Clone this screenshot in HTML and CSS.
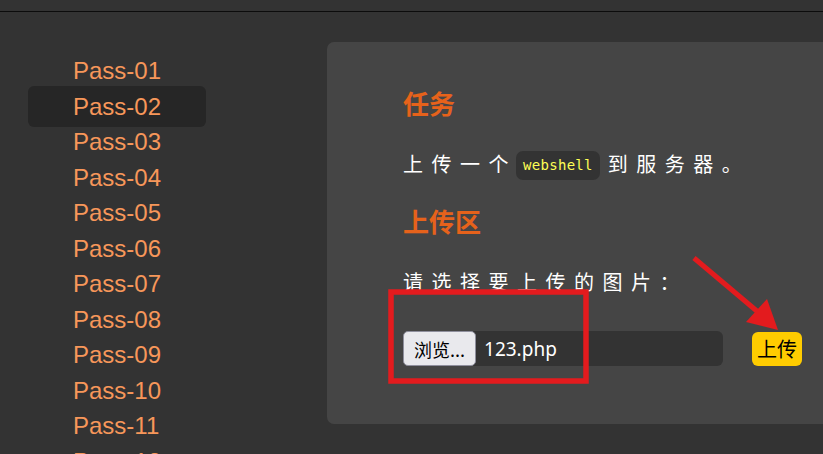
FILE: index.html
```html
<!DOCTYPE html>
<html lang="zh-CN">
<head>
  <meta charset="UTF-8" />
  <title>Upload Labs - Pass-02</title>
  <link rel="stylesheet" href="styles.css" />
</head>
<body>

<div class="topbar"></div>

<div class="layout">
  <!-- 左侧关卡列表 -->
  <ul class="menu">
    <li><a href="#">Pass-01</a></li>
    <li class="active"><a href="#">Pass-02</a></li>
    <li><a href="#">Pass-03</a></li>
    <li><a href="#">Pass-04</a></li>
    <li><a href="#">Pass-05</a></li>
    <li><a href="#">Pass-06</a></li>
    <li><a href="#">Pass-07</a></li>
    <li><a href="#">Pass-08</a></li>
    <li><a href="#">Pass-09</a></li>
    <li><a href="#">Pass-10</a></li>
    <li><a href="#">Pass-11</a></li>
    <li><a href="#">Pass-12</a></li>
  </ul>

  <!-- 主体 -->
  <section class="panel">
    <h2>任务</h2>
    <p class="text">上传一个<code>webshell</code>到服务器。</p>
    <h2>上传区</h2>
    <p class="text">请选择要上传的图片：</p>
    <form class="upload-row">
      <div class="file-field">
        <button type="button" class="browse">浏览...</button>
        <span class="file-name">123.php</span>
      </div>
      <button type="button" class="upload-btn">上传</button>
    </form>
  </section>
</div>

<!-- 标注 -->
<svg class="marks" width="823" height="454" viewBox="0 0 823 454">
  <rect x="391" y="292" width="195" height="89" fill="none" stroke="#e31b1e" stroke-width="5.5" />
  <line x1="694" y1="258" x2="758" y2="312" stroke="#e31b1e" stroke-width="5" />
  <polygon points="746,322 767,299 778,330" fill="#e31b1e" />
</svg>

</body>
</html>
```

FILE: styles.css
```css
/* Reset & Global */
* {
  box-sizing: border-box;
}
html, body {
  margin: 0;
  padding: 0;
  height: 100%;
  overflow: hidden;
}
body {
  background: #333333;
  font-family: "Noto Sans CJK SC", sans-serif;
  color: #ffffff;
  position: relative;
}

/* Top bar */
.topbar {
  height: 12px;
  border-bottom: 1px solid #0c0c0c;
}

.layout {
  display: flex;
  align-items: flex-start;
}

/* Menu */
.menu {
  list-style: none;
  margin: 41px 0 0 28px;
  padding: 0;
  width: 178px;
  flex-shrink: 0;
}
.menu li {
  line-height: 35.5px;
}
.menu li a {
  display: block;
  padding-left: 45px;
  font-family: "Liberation Sans", Arial, sans-serif;
  font-size: 24px;
  color: #f7975a;
  text-decoration: none;
  border-radius: 6px;
}
.menu li.active a {
  background: #262626;
  padding-top: 3px;
  padding-bottom: 3px;
  margin: -3px 0;
}

/* Panel */
.panel {
  flex-shrink: 0;
  width: 620px;
  margin: 30px 0 0 121px;
  padding: 43px 0 58px 76px;
  background: #454545;
  border-radius: 7px;
}
.panel h2 {
  margin: 0;
  font-size: 26px;
  line-height: 36px;
  font-weight: bold;
  color: #e6621b;
}
.panel h2 + .text {
  margin-top: 28px;
}
.text + h2 {
  margin-top: 23px;
}
.text {
  margin: 0;
  font-size: 20px;
  line-height: 30px;
  letter-spacing: 8.5px;
}
.text:last-of-type {
  margin-top: 24px;
}
.text code {
  display: inline-block;
  vertical-align: middle;
  margin: -2px 8px 0 -1px;
  padding: 0 7px;
  height: 29px;
  line-height: 29px;
  background: #333333;
  border-radius: 7px;
  font-family: "DejaVu Sans Mono", monospace;
  font-size: 14px;
  letter-spacing: 0.3px;
  color: #ffff55;
}

/* Upload row */
.upload-row {
  display: flex;
  align-items: center;
  margin-top: 34px;
}
.file-field {
  display: flex;
  align-items: center;
  width: 320px;
  height: 35px;
  background: #333333;
  border-radius: 6px;
}
.browse {
  height: 35px;
  padding: 0 10px;
  background: #e9e9ed;
  border: 1px solid #8f8f9d;
  border-radius: 5px;
  font-family: "Noto Sans CJK SC", sans-serif;
  font-size: 18px;
  color: #000000;
}
.file-name {
  margin-left: 8px;
  font-family: "Noto Sans", sans-serif;
  font-size: 19px;
  color: #ffffff;
}
.upload-btn {
  margin-left: 29px;
  height: 34px;
  padding: 0 5px;
  background: #ffcc00;
  border: none;
  border-radius: 6px;
  font-family: "Noto Sans CJK SC", sans-serif;
  font-size: 20px;
  color: #000000;
}

/* Annotations */
.marks {
  position: absolute;
  left: 0;
  top: 0;
  pointer-events: none;
}
```
